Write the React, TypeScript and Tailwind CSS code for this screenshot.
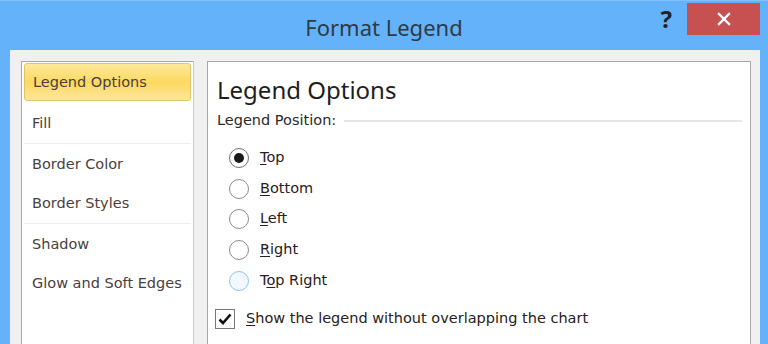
import React from "react";

const navGroups = [
  ["Legend Options", "Fill"],
  ["Border Color", "Border Styles"],
  ["Shadow", "Glow and Soft Edges"],
];

const positions = [
  { id: "top", pre: "", key: "T", post: "op", checked: true },
  { id: "bottom", pre: "", key: "B", post: "ottom" },
  { id: "left", pre: "", key: "L", post: "eft" },
  { id: "right", pre: "", key: "R", post: "ight" },
  { id: "topright", pre: "T", key: "o", post: "p Right", focus: true },
];

const uiFont = { fontFamily: '"DejaVu Sans", Verdana, sans-serif' };
const headFont = { fontFamily: '"Noto Sans", "Open Sans", sans-serif' };

function Radio({ checked, focus }: { checked?: boolean; focus?: boolean }) {
  return (
    <span
      className={`w-[20px] h-[20px] rounded-full border flex items-center justify-center shrink-0 ${
        focus ? "border-[#8ec3f2] bg-[#f2f8fe]" : checked ? "border-[#707070] bg-white" : "border-[#8c8c8c] bg-white"
      }`}
    >
      {checked && <span className="w-[10px] h-[10px] rounded-full bg-[#1a1a1a]" />}
    </span>
  );
}

export default function App() {
  return (
    <div className="w-[768px] h-[344px] overflow-hidden bg-[#64b2fa] flex flex-col" style={uiFont}>
      {/* title bar */}
      <div className="h-[50px] shrink-0 relative flex items-center justify-center border-t border-[#80c0fc]">
        <span className="text-[22px] text-[#2f3a45] mt-[4px]" style={headFont}>
          Format Legend
        </span>
        <div className="absolute right-[8px] top-[2px] flex items-start">
          <span className="text-[24px] font-bold text-[#222] mr-[15px] mt-[1px] leading-[30px]" style={headFont}>
            ?
          </span>
          <button className="w-[73px] h-[32px] bg-[#c75050] flex items-center justify-center text-white">
            <svg width="14" height="14" viewBox="0 0 14 14">
              <path d="M2 2 L12 12 M12 2 L2 12" stroke="white" strokeWidth="2.4" strokeLinecap="square" />
            </svg>
          </button>
        </div>
      </div>

      {/* body */}
      <div className="flex-1 ml-[10px] mr-[8px] bg-[#f0f0f0] flex gap-[13px] pl-[11px] pr-[9px] pt-[11px] overflow-hidden">
        {/* nav */}
        <div className="w-[173px] h-[300px] shrink-0 bg-white border border-[#a7a7a7] border-r-[#c9c9c9] px-[2px] pt-[1px]">
          {navGroups.map((group, gi) => (
            <div key={gi} className={gi > 0 ? "border-t border-[#eeeeee] pt-[1px]" : ""}>
              {group.map((item) => {
                const active = item === "Legend Options";
                return (
                  <div
                    key={item}
                    className={`flex items-center pl-[8px] text-[14.5px] text-[#4a4040] ${
                      active
                        ? "rounded-[3px] border border-[#e2c26a] bg-gradient-to-b from-[#fde99a] via-[#fcd95e] to-[#fde69a] h-[38px] mb-[3px] pt-[2px]"
                        : "h-[39px] pt-[1px]"
                    }`}
                  >
                    {item}
                  </div>
                );
              })}
            </div>
          ))}
        </div>

        {/* content */}
        <div className="flex-1 h-[300px] bg-white border border-[#a7a7a7] pl-[9px] pr-[8px] pt-[12px]">
          <div className="text-[24px] leading-[32px] text-[#1e1e1e]" style={headFont}>
            Legend Options
          </div>
          <div className="flex items-center gap-[8px] mt-[4px]">
            <span className="text-[14.5px] text-[#2a2a2a]">Legend Position:</span>
            <span className="flex-1 h-[2px] bg-[#e6e6e6]" />
          </div>
          <div className="mt-[16px] pl-[12px] flex flex-col gap-[10.75px]">
            {positions.map((p) => (
              <label key={p.id} className="flex items-center gap-[11px] h-[20px] text-[14.5px] text-[#2a2020]">
                <Radio checked={p.checked} focus={p.focus} />
                <span>
                  {p.pre}
                  <span className="underline underline-offset-2">{p.key}</span>
                  {p.post}
                </span>
              </label>
            ))}
          </div>
          <label className="flex items-center gap-[11px] mt-[17px] text-[14.5px] text-[#2a2020]">
            <span className="w-[20px] h-[20px] border border-[#777] bg-white flex items-center justify-center shrink-0 -ml-[2px]">
              <svg width="14" height="12" viewBox="0 0 14 12">
                <path d="M1.5 6.5 L5 10 L12.5 1.5" stroke="#111" strokeWidth="2.6" fill="none" />
              </svg>
            </span>
            <span>
              <span className="underline underline-offset-2">S</span>how the legend without overlapping the chart
            </span>
          </label>
        </div>
      </div>
    </div>
  );
}
